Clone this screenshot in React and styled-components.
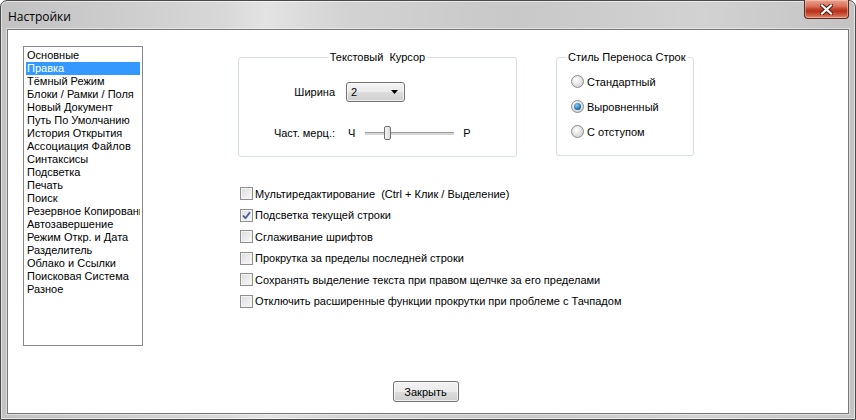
import React from 'react';
import styled, { createGlobalStyle } from 'styled-components';

const Global = createGlobalStyle`
  html, body { margin: 0; padding: 0; background: #ffffff; }
  body { width: 856px; height: 420px; overflow: hidden; }
  * { box-sizing: border-box; }
`;

const Window = styled.div`
  width: 856px;
  height: 420px;
  border: 1px solid #4b4b4b;
  border-radius: 7px 7px 0 0;
  background: linear-gradient(to right, #c2c2c2 0%, #cdcdcd 14%, #d8d8d8 26%, #e3e3e3 31%, #d3d3d3 40%, #c8c8c8 60%, #d2d2d2 82%, #c3c3c3 100%);
  box-shadow: inset 0 0 0 1px rgba(255, 255, 255, 0.55);
  display: flex;
  flex-direction: column;
  font-family: "Liberation Sans", Arial, sans-serif;
  font-size: 11px;
  color: #000;
`;

const TitleBar = styled.div`
  height: 28px;
  display: flex;
  align-items: flex-start;
  padding-left: 7px;
`;

const TitleText = styled.div`
  margin-top: 8px;
  font-family: "Open Sans", "Noto Sans", sans-serif;
  font-size: 12px;
  line-height: 16px;
  color: #000;
`;

const CloseCaption = styled.div`
  margin-left: auto;
  margin-right: 6px;
  margin-top: -1px;
  width: 45px;
  height: 19px;
  border: 1px solid #5a2a1e;
  border-top: none;
  border-radius: 0 0 4px 4px;
  background: linear-gradient(to bottom, #e9a38f 0%, #d9715b 35%, #c4432b 50%, #b5311b 62%, #cf5e43 85%, #e08b6e 100%);
  box-shadow: inset 0 0 0 1px rgba(255, 220, 200, 0.45);
  display: flex;
  align-items: center;
  justify-content: center;
`;

const Client = styled.div`
  flex: 1;
  margin: 0 6px 5px 6px;
  border: 1px solid #777777;
  box-shadow: 0 0 0 1px rgba(255, 255, 255, 0.45);
  background: #ffffff;
  display: flex;
  flex-direction: column;
`;

const Body = styled.div`
  flex: 1;
  display: flex;
  align-items: flex-start;
  padding: 16px 0 0 15px;
`;

const ListBox = styled.div`
  width: 120px;
  height: 300px;
  border: 1px solid #828790;
  padding: 2px 2px 0 2px;
  display: flex;
  flex-direction: column;
  overflow: hidden;
`;

const ListItem = styled.div`
  height: 13px;
  line-height: 13px;
  padding-left: 1px;
  white-space: nowrap;
  overflow: hidden;
  background: ${p => (p.$selected ? '#3399ff' : 'transparent')};
  color: ${p => (p.$selected ? '#ffffff' : '#000000')};
`;

const Main = styled.div`
  margin-left: 95px;
  margin-top: 11px;
  display: flex;
  flex-direction: column;
`;

const TopRow = styled.div`
  display: flex;
  align-items: flex-start;
  gap: 39px;
`;

const GroupBox = styled.div`
  position: relative;
  width: ${p => p.$w}px;
  height: ${p => p.$h}px;
  border: 1px solid #d5dfe5;
  border-radius: 3px;
  box-shadow: inset 0 0 0 1px #ffffff;
`;

const Legend = styled.div`
  position: absolute;
  top: -7px;
  ${p => (p.$center ? 'left: 50%; transform: translateX(-50%);' : `left: ${p.$left}px;`)}
  padding: 0 2px;
  background: #ffffff;
  line-height: 13px;
  white-space: pre;
`;

const CursorGrid = styled.div`
  display: grid;
  grid-template-columns: 96px auto;
  column-gap: 11px;
  row-gap: 24px;
  padding-top: 24px;
  align-items: center;
`;

const FieldLabel = styled.div`
  justify-self: end;
  line-height: 14px;
  white-space: nowrap;
`;

const Combo = styled.div`
  width: 59px;
  height: 20px;
  border: 1px solid #707070;
  border-radius: 3px;
  background: linear-gradient(to bottom, #f2f2f2 0%, #ebebeb 50%, #dddddd 51%, #cfcfcf 100%);
  box-shadow: inset 0 0 0 1px rgba(255, 255, 255, 0.7);
  display: flex;
  align-items: center;
  padding: 0 6px 0 4px;
  justify-content: space-between;
`;

const SliderRow = styled.div`
  display: flex;
  align-items: center;
  height: 14px;
  margin-left: 2px;
`;

const SliderTrack = styled.div`
  position: relative;
  width: 89px;
  height: 14px;
  margin: 0 9px 0 10px;
  &::before {
    content: '';
    position: absolute;
    left: 0;
    right: 0;
    top: 6px;
    height: 2px;
    background: #d6d6d6;
    border-top: 1px solid #9d9d9d;
  }
`;

const Thumb = styled.div`
  position: absolute;
  left: 19px;
  top: 0;
  width: 7px;
  height: 14px;
  border: 1px solid #707070;
  border-radius: 2px;
  background: linear-gradient(to right, #f6f6f6, #dcdcdc);
`;

const RadioList = styled.div`
  display: flex;
  flex-direction: column;
  gap: 12px;
  padding: 17px 0 0 14px;
`;

const Option = styled.div`
  display: flex;
  align-items: center;
  height: 13px;
  gap: ${p => p.$gap}px;
  white-space: pre;
`;

const RadioDot = styled.span`
  width: 13px;
  height: 13px;
  border-radius: 50%;
  border: 1px solid #8b8b8b;
  background: radial-gradient(circle at 40% 35%, #ffffff 0%, #e6e6e6 45%, #c9c9c9 100%);
  display: flex;
  align-items: center;
  justify-content: center;
  flex: none;
  &::after {
    content: '';
    display: ${p => (p.$checked ? 'block' : 'none')};
    width: 7px;
    height: 7px;
    border-radius: 50%;
    background: radial-gradient(circle at 40% 35%, #8fd0f5 0%, #2a79b6 55%, #13466f 100%);
  }
`;

const CheckList = styled.div`
  display: flex;
  flex-direction: column;
  gap: 8.6px;
  margin-top: 30px;
  margin-left: 2px;
`;

const CheckBox = styled.span`
  width: 13px;
  height: 13px;
  border: 1px solid #8f8f8f;
  background: linear-gradient(135deg, #dcdcdc 0%, #eeeeee 60%, #fafafa 100%);
  box-shadow: inset 0 0 0 1px #f4f4f4;
  display: flex;
  align-items: center;
  justify-content: center;
  flex: none;
`;

const Footer = styled.div`
  display: flex;
  justify-content: center;
  padding: 0 5px 11px 0;
`;

const Button = styled.div`
  width: 66px;
  height: 21px;
  border: 1px solid #707070;
  border-radius: 3px;
  background: linear-gradient(to bottom, #f2f2f2 0%, #ebebeb 50%, #dddddd 51%, #cfcfcf 100%);
  box-shadow: inset 0 0 0 1px rgba(255, 255, 255, 0.75);
  display: flex;
  align-items: center;
  justify-content: center;
`;

const categories = [
  'Основные', 'Правка', 'Тёмный Режим', 'Блоки / Рамки / Поля', 'Новый Документ',
  'Путь По Умолчанию', 'История Открытия', 'Ассоциация Файлов', 'Синтаксисы',
  'Подсветка', 'Печать', 'Поиск', 'Резервное Копирование', 'Автозавершение',
  'Режим Откр. и Дата', 'Разделитель', 'Облако и Ссылки', 'Поисковая Система', 'Разное',
];

const wraps = [
  { label: 'Стандартный', checked: false },
  { label: 'Выровненный', checked: true },
  { label: 'С отступом', checked: false },
];

const options = [
  { label: 'Мультиредактирование  (Ctrl + Клик / Выделение)', checked: false },
  { label: 'Подсветка текущей строки', checked: true },
  { label: 'Сглаживание шрифтов', checked: false },
  { label: 'Прокрутка за пределы последней строки', checked: false },
  { label: 'Сохранять выделение текста при правом щелчке за его пределами', checked: false },
  { label: 'Отключить расширенные функции прокрутки при проблеме с Тачпадом', checked: false },
];

const CheckMark = () => (
  <svg width="9" height="9" viewBox="0 0 9 9">
    <path d="M1 4.5 L3.4 7.2 L8 1.2" fill="none" stroke="#4a5c8f" strokeWidth="1.8" strokeLinejoin="round" />
  </svg>
);

const CloseGlyph = () => (
  <svg width="13" height="11" viewBox="0 0 13 11">
    <path d="M2 1.5 L11 9.5 M11 1.5 L2 9.5" stroke="#4a1a10" strokeWidth="4" strokeLinecap="square" />
    <path d="M2 1.5 L11 9.5 M11 1.5 L2 9.5" stroke="#ffffff" strokeWidth="2.2" strokeLinecap="square" />
  </svg>
);

const ComboArrow = () => (
  <svg width="7" height="4" viewBox="0 0 7 4">
    <path d="M0 0 H7 L3.5 4 Z" fill="#000" />
  </svg>
);

export default function App() {
  return (
    <>
      <Global />
      <Window>
        <TitleBar>
          <TitleText>Настройки</TitleText>
          <CloseCaption><CloseGlyph /></CloseCaption>
        </TitleBar>
        <Client>
          <Body>
            <ListBox>
              {categories.map((c, i) => (
                <ListItem key={c} $selected={i === 1}>{c}</ListItem>
              ))}
            </ListBox>
            <Main>
              <TopRow>
                <GroupBox $w={279} $h={100}>
                  <Legend $center>Текстовый  Курсор</Legend>
                  <CursorGrid>
                    <FieldLabel>Ширина</FieldLabel>
                    <Combo><span>2</span><ComboArrow /></Combo>
                    <FieldLabel>Част. мерц.:</FieldLabel>
                    <SliderRow>
                      <span>Ч</span>
                      <SliderTrack><Thumb /></SliderTrack>
                      <span>Р</span>
                    </SliderRow>
                  </CursorGrid>
                </GroupBox>
                <GroupBox $w={138} $h={99}>
                  <Legend $left={9}>Стиль Переноса Строк</Legend>
                  <RadioList>
                    {wraps.map(w => (
                      <Option key={w.label} $gap={3}>
                        <RadioDot $checked={w.checked} />
                        <span>{w.label}</span>
                      </Option>
                    ))}
                  </RadioList>
                </GroupBox>
              </TopRow>
              <CheckList>
                {options.map(o => (
                  <Option key={o.label} $gap={2}>
                    <CheckBox>{o.checked && <CheckMark />}</CheckBox>
                    <span>{o.label}</span>
                  </Option>
                ))}
              </CheckList>
            </Main>
          </Body>
          <Footer>
            <Button>Закрыть</Button>
          </Footer>
        </Client>
      </Window>
    </>
  );
}
